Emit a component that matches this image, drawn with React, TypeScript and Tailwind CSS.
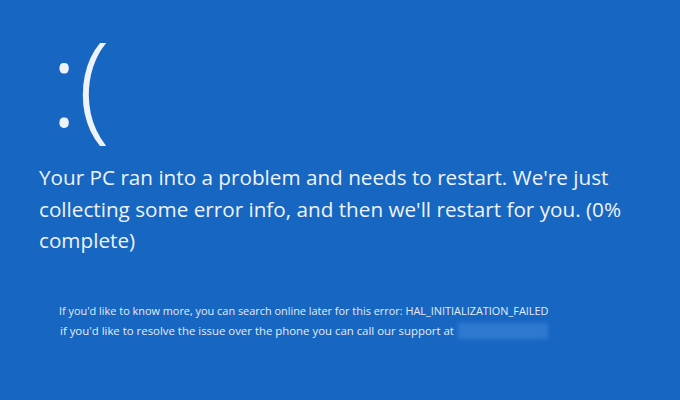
export default function App() {
  return (
    <div
      className="w-[680px] h-[400px] bg-[#1766c1] text-[#eef3fa] overflow-hidden"
      style={{ fontFamily: '"Open Sans", "Noto Sans", sans-serif' }}
    >
      <div className="pt-[15px] pl-[50px] flex items-start">
        <span className="text-[118px] leading-[134px] font-light tracking-[0px]">:(</span>
      </div>
      <div className="pl-[39px] pt-[13px] pr-[40px] text-[20.7px] leading-[31.5px]">
        Your PC ran into a problem and needs to restart. We're just
        <br />
        collecting some error info, and then we'll restart for you. (0%
        <br />
        complete)
      </div>
      <div className="pl-[59px] pt-[44px] text-[10.9px] leading-[20px] text-[#e4ecf7]">
        <div>If you'd like to know more, you can search online later for this error: HAL_INITIALIZATION_FAILED</div>
        <div className="flex items-center text-[11.4px] pl-[1px]">
          <span>if you'd like to resolve the issue over the phone you can call our support at</span>
          <span className="ml-[4px] inline-block w-[90px] h-[16px] bg-[#2f7ad0] blur-[2px]"></span>
        </div>
      </div>
    </div>
  );
}
